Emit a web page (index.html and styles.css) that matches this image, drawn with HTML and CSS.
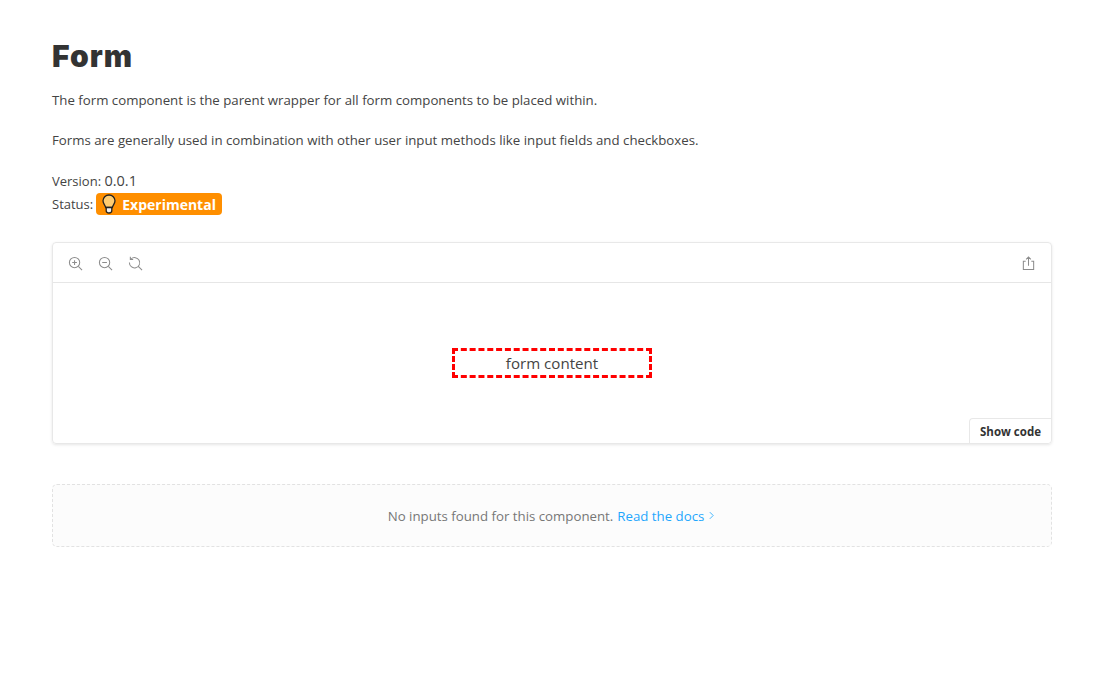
FILE: index.html
```html
<!DOCTYPE html>
<html lang="en">
<head>
<meta charset="utf-8">
<title>Form</title>
<link rel="stylesheet" href="styles.css">
</head>
<body>
<main class="page">
  <h1 class="title">Form</h1>
  <p class="desc">The form component is the parent wrapper for all form components to be placed within.</p>
  <p class="desc">Forms are generally used in combination with other user input methods like input fields and checkboxes.</p>
  <div class="meta"><span>Version:</span> <span class="version">0.0.1</span></div>
  <div class="meta status"><span>Status:</span>
    <span class="badge">
      <svg class="bulb" viewBox="0 0 14 20" aria-hidden="true">
        <path d="M7 1C3.600 1 1 3.500 1 6.800c0 2.700 2 4 2.700 6.700h6.600c.7-2.700 2.700-4 2.700-6.700C13 3.500 10.400 1 7 1z" fill="#ffcc70" stroke="#222" stroke-width="1.300"/>
        <path d="M4.200 13.500h5.600v3c0 1.200-.8 2.500-2.800 2.500s-2.800-1.300-2.800-2.500z" fill="#f2f2f2" stroke="#222" stroke-width="1.300"/>
      </svg>
      <span>Experimental</span>
    </span>
  </div>

  <section class="preview">
    <div class="toolbar">
      <div class="tools">
        <svg class="icon" viewBox="0 0 16 16" aria-hidden="true"><circle cx="7" cy="7" r="5.500"/><path d="M11 11l4 4M4.500 7h5M7 4.500v5"/></svg>
        <svg class="icon" viewBox="0 0 16 16" aria-hidden="true"><circle cx="7" cy="7" r="5.500"/><path d="M11 11l4 4M4.500 7h5"/></svg>
        <svg class="icon" viewBox="0 0 16 16" aria-hidden="true"><path d="M3.200 3.200A5.500 5.500 0 1 1 1.500 7M11 11l4 4M2.500 .8v3h3"/></svg>
      </div>
      <svg class="icon" viewBox="0 0 16 16" aria-hidden="true"><path d="M5 5.500H2.500v9h11v-9H11M8 10.500V1M5.500 3.500L8 1l2.500 2.500"/></svg>
    </div>
    <div class="stage">
      <div class="sample">form content</div>
      <button class="show-code" type="button">Show code</button>
    </div>
  </section>

  <section class="empty">
    <span>No inputs found for this component.</span>
    <a class="docs" href="#">Read the docs
      <svg class="chev" viewBox="0 0 6 10" aria-hidden="true"><path d="M1 1l4 4-4 4"/></svg>
    </a>
  </section>
</main>
</body>
</html>
```
FILE: styles.css
```css
* { box-sizing: border-box; }
html, body { margin: 0; background: #fff; }
body {
  font-family: "Open Sans", "Noto Sans", sans-serif;
  color: #444;
  font-size: 13.25px;
}
.page { padding: 33px 52px 0; }
.title {
  margin: 0;
  font-family: "Inter", sans-serif;
  font-weight: 900;
  font-size: 30px;
  letter-spacing: 1px;
  line-height: 46px;
  color: #333;
}
.desc {
  margin: 0 0 20px;
  line-height: 20px;
}
.desc:first-of-type { margin-top: 11px; }
.meta { line-height: 21px; font-size: 13px; }
.version { font-size: 14.5px; }
.status { display: flex; align-items: center; gap: 3px; margin-top: 1px; height: 22px; }
.badge {
  display: inline-flex;
  align-items: center;
  gap: 6px;
  height: 22px;
  padding: 0 6px 0 6px;
  background: #ff8f00;
  color: #fff;
  border-radius: 4px;
  font-weight: 700;
  font-size: 14px;
}
.bulb { display: block; width: 14px; height: 20px; }
.preview {
  margin-top: 27px;
  height: 202px;
  border: 1px solid #e8e8e8;
  border-radius: 4px;
  box-shadow: 0 1px 3px rgba(0,0,0,.1);
  display: flex;
  flex-direction: column;
}
.toolbar {
  height: 40px;
  flex: none;
  border-bottom: 1px solid #e6e6e6;
  display: flex;
  align-items: center;
  justify-content: space-between;
  padding: 2px 15px 0;
}
.tools { display: flex; gap: 15px; }
.icon {
  display: block;
  width: 15px;
  height: 15px;
  fill: none;
  stroke: #8c8c8c;
  stroke-width: 1.100;
}
.stage {
  flex: 1;
  position: relative;
  display: flex;
  align-items: center;
  justify-content: center;
}
.sample {
  width: 200px;
  height: 30px;
  border: 3px dashed #f00;
  display: flex;
  align-items: center;
  justify-content: center;
  font-size: 15.100px;
}
.show-code {
  position: absolute;
  right: 0;
  bottom: 0;
  height: 25px;
  width: 82px;
  padding: 0;
  background: #fff;
  border: 1px solid #e8e8e8;
  border-width: 1px 0 0 1px;
  border-radius: 4px 0 4px 0;
  font: 700 11.500px "Open Sans", sans-serif;
  color: #333;
}
.empty {
  margin-top: 40px;
  height: 63px;
  border: 1px dashed #e2e2e2;
  border-radius: 5px;
  background: #fcfcfc;
  display: flex;
  align-items: center;
  justify-content: center;
  gap: 4px;
  padding-right: 2px;
  color: #777;
}
.docs {
  color: #1ea7fd;
  text-decoration: none;
  display: inline-flex;
  align-items: center;
  gap: 5px;
}
.chev { width: 5px; height: 9px; fill: none; stroke: #1ea7fd; stroke-width: 1; }
```
